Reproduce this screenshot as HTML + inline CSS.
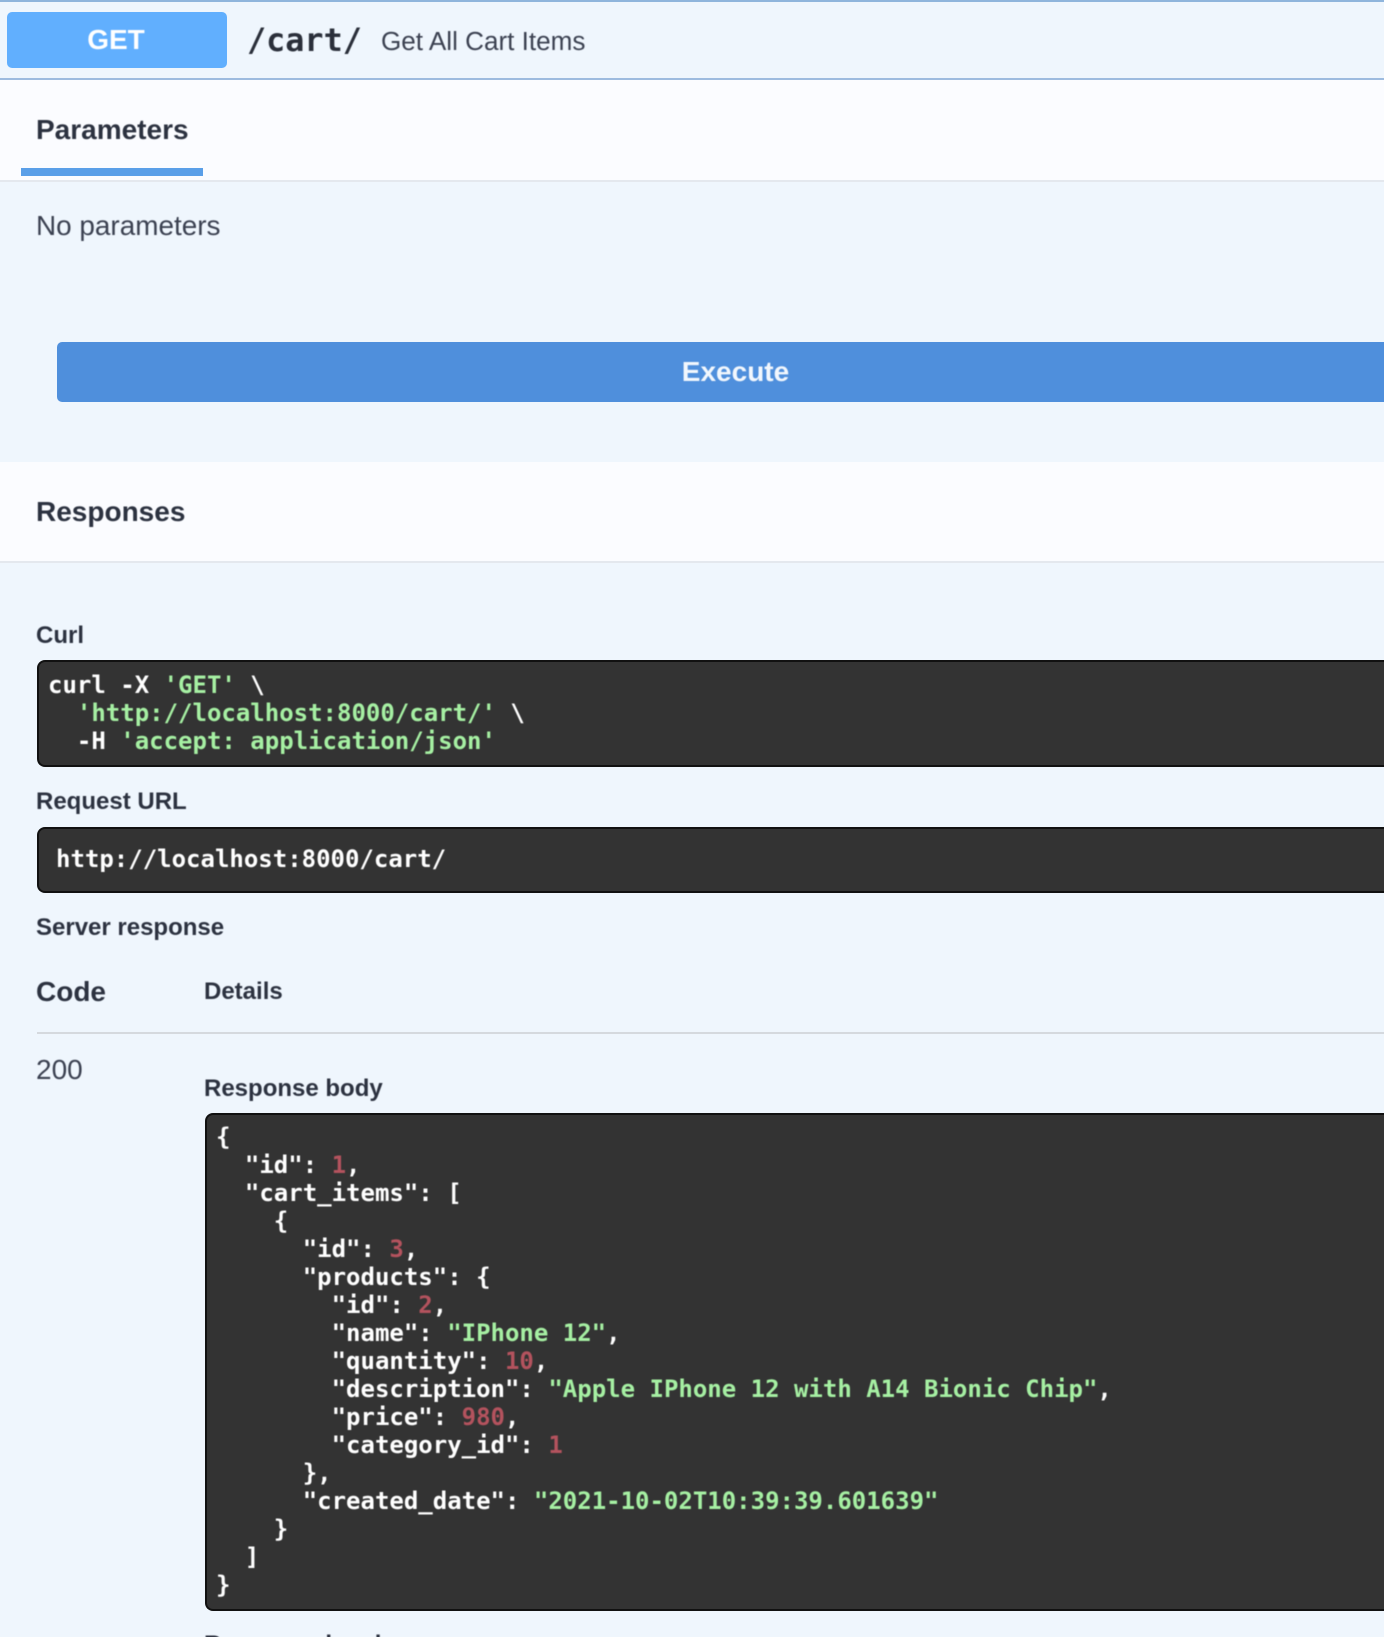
<!DOCTYPE html>
<html><head><meta charset="utf-8"><style>
html,body{margin:0;padding:0;width:1384px;height:1637px;overflow:hidden;background:#eff6fd}
body{position:relative;font-family:"Liberation Sans",sans-serif;color:#3b4151}
.a{position:absolute;white-space:pre}
.t{filter:blur(.5px)}
.b{font-weight:bold}
.l{color:#2c3240}
.block{position:absolute;background:#333;border:2px solid #111;border-right:none;border-radius:8px 0 0 8px;box-sizing:border-box;right:0}
.m{font-family:"DejaVu Sans Mono",monospace;font-weight:bold;font-size:24px;line-height:28px;color:#fff;filter:blur(.5px)}
.g{color:#a6f0a3}.r{color:#b4535e}
</style></head><body>
<div class="a" style="left:0;top:0;width:1384px;height:80px;background:#eff6fd"></div>
<div class="a" style="left:0;top:0;width:1384px;height:2px;background:#8fb5dc"></div>
<div class="a" style="left:0;top:78px;width:1384px;height:2px;background:#9dbbdf"></div>
<div class="a" style="left:7px;top:12px;width:220px;height:56px;background:#61affe;border-radius:5px"></div>
<div class="a t b" style="left:7px;top:12px;width:218px;height:56px;line-height:55px;text-align:center;font-size:28px;color:#fff">GET</div>
<div class="a" style="left:247px;top:21px;font-family:'DejaVu Sans Mono',monospace;font-weight:bold;font-size:31.8px;line-height:40px;color:#2a2f3a;filter:blur(.5px)">/cart/</div>
<div class="a t" style="left:381px;top:24px;font-size:26.1px;line-height:34px">Get All Cart Items</div>

<div class="a" style="left:0;top:80px;width:1384px;height:100px;background:#fbfcff"></div>
<div class="a" style="left:0;top:180px;width:1384px;height:2px;background:#e4e8ee"></div>
<div class="a t b l" style="left:36px;top:112px;font-size:28px;line-height:36px">Parameters</div>
<div class="a" style="left:21px;top:168px;width:182px;height:8px;background:#5a9fe8"></div>
<div class="a t" style="left:36px;top:208px;font-size:27.9px;line-height:36px">No parameters</div>
<div class="a" style="left:57px;top:342px;width:1327px;height:60px;background:#4f8fdc;border-radius:5px 0 0 5px"></div>
<div class="a t b" style="left:57px;top:342px;width:1357px;height:60px;line-height:60px;text-align:center;font-size:28px;color:#f2f7fd">Execute</div>

<div class="a" style="left:0;top:462px;width:1384px;height:100px;background:#fbfcff"></div>
<div class="a" style="left:0;top:561px;width:1384px;height:2px;background:#e4e8ee"></div>
<div class="a t b l" style="left:36px;top:494px;font-size:28px;line-height:36px">Responses</div>

<div class="a t b l" style="left:36px;top:621px;font-size:24px;line-height:30px">Curl</div>
<div class="block" style="left:37px;top:660px;height:107px"></div>
<div class="a m" style="left:48px;top:671px">curl -X <span class="g">'GET'</span> \
  <span class="g">'http://localhost:8000/cart/'</span> \
  -H <span class="g">'accept: application/json'</span></div>

<div class="a t b l" style="left:36px;top:787px;font-size:24px;line-height:30px">Request URL</div>
<div class="block" style="left:37px;top:827px;height:66px"></div>
<div class="a m" style="left:56px;top:845px">http://localhost:8000/cart/</div>

<div class="a t b l" style="left:36px;top:913px;font-size:24px;line-height:30px">Server response</div>
<div class="a t b l" style="left:36px;top:974px;font-size:28px;line-height:36px">Code</div>
<div class="a t b l" style="left:204px;top:977px;font-size:24px;line-height:30px">Details</div>
<div class="a" style="left:37px;top:1032px;width:1347px;height:2px;background:#d5d9de"></div>
<div class="a t" style="left:36px;top:1052px;font-size:28px;line-height:36px">200</div>
<div class="a t b l" style="left:204px;top:1074px;font-size:24px;line-height:30px">Response body</div>
<div class="block" style="left:205px;top:1113px;height:498px"></div>
<div class="a m" style="left:216px;top:1123px">{
  "id": <span class="r">1</span>,
  "cart_items": [
    {
      "id": <span class="r">3</span>,
      "products": {
        "id": <span class="r">2</span>,
        "name": <span class="g">"IPhone 12"</span>,
        "quantity": <span class="r">10</span>,
        "description": <span class="g">"Apple IPhone 12 with A14 Bionic Chip"</span>,
        "price": <span class="r">980</span>,
        "category_id": <span class="r">1</span>
      },
      "created_date": <span class="g">"2021-10-02T10:39:39.601639"</span>
    }
  ]
}</div>
<div class="a t b l" style="left:204px;top:1630px;font-size:24px;line-height:30px">Response headers</div>
</body></html>
